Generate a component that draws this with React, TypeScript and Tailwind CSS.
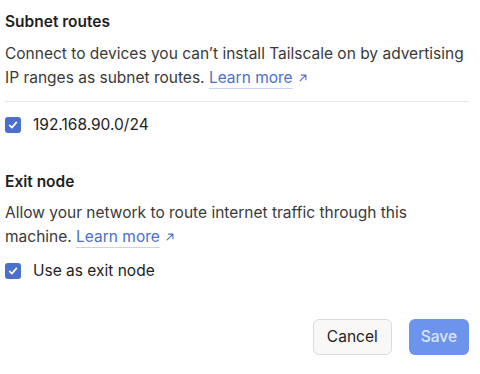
import { useState } from "react";

function Check({ checked, onChange }: { checked: boolean; onChange: () => void }) {
  return (
    <button
      onClick={onChange}
      className={`flex h-[16px] w-[16px] shrink-0 items-center justify-center rounded-[3px] ${
        checked ? "bg-[#4b70cc]" : "border border-gray-300 bg-white"
      }`}
    >
      {checked && (
        <svg viewBox="0 0 16 16" className="h-[12px] w-[12px]" fill="none" stroke="white" strokeWidth="2.2" strokeLinecap="round" strokeLinejoin="round">
          <path d="M3.5 8.5l3 3 6-7" />
        </svg>
      )}
    </button>
  );
}

function LearnMore() {
  return (
    <a href="#" className="text-[#4b6fcb] underline decoration-[#c7d3f2] underline-offset-[5px]">
      Learn more
      <svg viewBox="0 0 12 12" className="ml-[5px] inline h-[10px] w-[10px] align-[0px]" fill="none" stroke="currentColor" strokeWidth="1.3" strokeLinecap="round" strokeLinejoin="round">
        <path d="M2.5 9.5l7-7M4 2.5h5.5V8" />
      </svg>
    </a>
  );
}

export default function App() {
  const [subnet, setSubnet] = useState(true);
  const [exitNode, setExitNode] = useState(true);

  return (
    <div className="w-[480px] h-[374px] bg-white text-[#232222] font-['Inter',sans-serif]">
      <div className="ml-[5px] w-[464px] pt-[12px]">
        <h3 className="text-[15.5px] font-semibold leading-[20px] text-[#1f1e1e]">Subnet routes</h3>
        <p className="mt-[10px] text-[15.5px] leading-[24px] text-[#3a3939]">
          Connect to devices you can’t install Tailscale on by advertising IP ranges as subnet routes. <LearnMore />
        </p>
        <div className="mt-[11px] border-t border-[#e8e7e6]" />
        <label className="mt-[13px] flex items-center gap-[12px] text-[15.5px] leading-[20px]">
          <Check checked={subnet} onChange={() => setSubnet((v) => !v)} />
          192.168.90.0/24
        </label>

        <h3 className="mt-[37px] text-[15.5px] font-semibold leading-[20px] text-[#1f1e1e]">Exit node</h3>
        <p className="mt-[9px] text-[15.5px] leading-[24px] text-[#3a3939]">
          Allow your network to route internet traffic through this machine. <LearnMore />
        </p>
        <label className="mt-[12px] flex items-center gap-[12px] text-[15.5px] leading-[20px]">
          <Check checked={exitNode} onChange={() => setExitNode((v) => !v)} />
          Use as exit node
        </label>

        <div className="mt-[38px] flex justify-end gap-[17px]">
          <button className="h-[36px] rounded-[6px] border border-[#dcdbd9] bg-[#f9f8f7] px-[13px] text-[15.5px] text-[#232222]">
            Cancel
          </button>
          <button className="h-[36px] rounded-[6px] bg-[#6c94ec] px-[12px] text-[15.5px] font-medium text-[#dde7fb]">
            Save
          </button>
        </div>
      </div>
    </div>
  );
}
